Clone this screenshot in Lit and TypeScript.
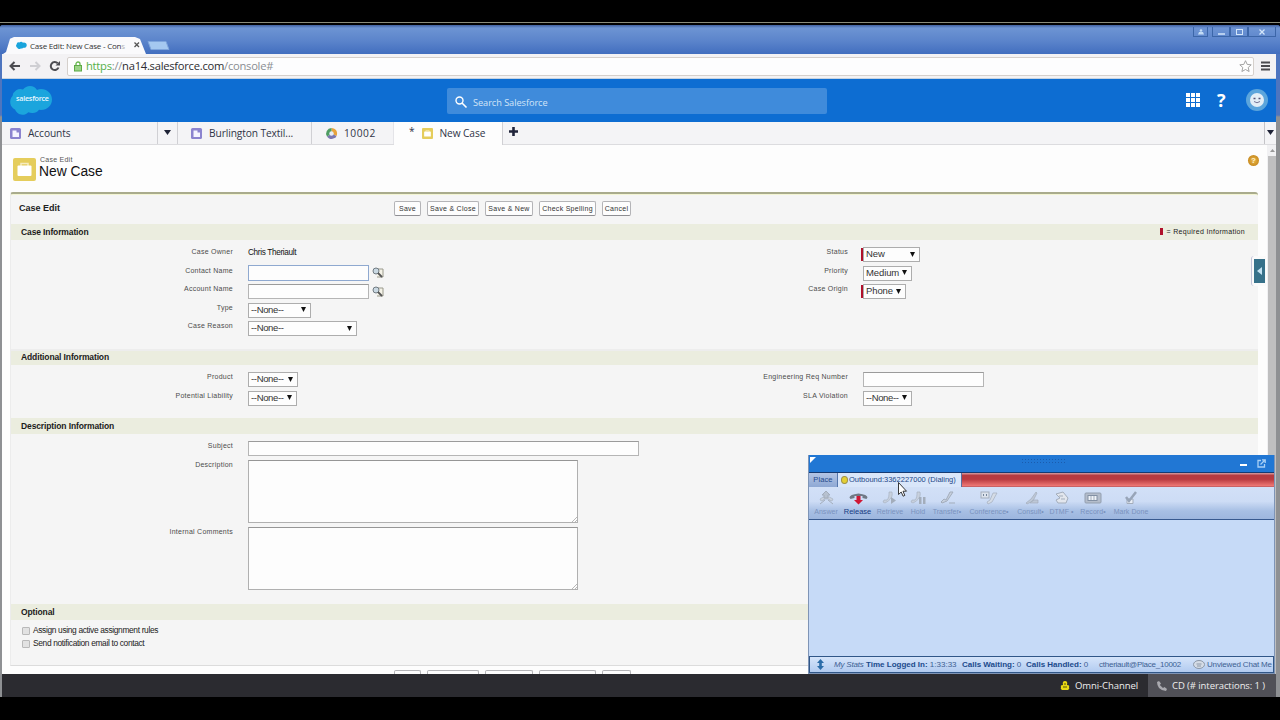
import { LitElement, html, css, svg } from "lit";
import { customElement } from "lit/decorators.js";

const cloudPath = "M13 5.5A9 9 0 0 1 20 2c3 0 5.500 1.500 7 4a9 9 0 0 1 4-1c6 0 11 4.500 11 10.500S37 26 31 26l-2-.2a8 8 0 0 1-7 3.200c-1.300 0-2.500-.3-3.600-.8A8 8 0 0 1 5 25.500 8.500 8.500 0 0 1 2.500 12 8 8 0 0 1 13 5.500z";

const arrow = svg`<path d="M0 0h5L2.500 5z" fill="#111"/>`;

@customElement("app-root")
export class AppRoot extends LitElement {
  static styles = css`
    :host { display: block; width: 1280px; height: 720px; background: #000; overflow: hidden; font-family: "Liberation Sans", Arial, sans-serif; color: #222; }
    * { box-sizing: border-box; }
    svg { display: block; flex: none; overflow: visible; }
    .screen { height: 720px; display: flex; flex-direction: column; position: relative; white-space: nowrap; }
    .strip { height: 25px; flex: none; padding-top: 22px; }
    .strip-line { height: 1px; background: #8a8c7c; }
    .window { height: 672px; flex: none; display: flex; flex-direction: column; background: linear-gradient(#4e75bf 0 90px, #8e9093 92px); padding: 0 4px 0 2px; border-top-left-radius: 3px; border-top-right-radius: 3px; overflow: hidden; }
    .titlebar { height: 29px; flex: none; margin: 0 -4px 0 -2px; background: linear-gradient(#3f5f9f 0, #6d94d3 3px, #5b84cb 55%, #426ebf); display: flex; align-items: flex-end; justify-content: space-between; }
    .tabs { display: flex; align-items: flex-end; padding-left: 3px; }
    .btab { width: 143px; height: 17px; background: #fafafc; clip-path: polygon(0 100%, 3px 88%, 7px 10%, 11px 0, 132px 0, 137px 12%, 143px 100%); display: flex; align-items: center; padding-left: 13px; font: 8px "Open Sans", sans-serif; color: #333; }
    .btab .t { width: 99px; margin: -1px 5px 0 3px; letter-spacing: -.2px; }
    .btab .f { color: #b5b5b8; }
    .btab svg { margin-top: -1px; }
    .newtab { width: 19px; height: 9px; margin: 0 0 4px 3px; background: #a5c8f0; border: 1px solid #7fa5dc; transform: skewX(20deg); border-radius: 1px; }
    .wbtns { align-self: flex-start; display: flex; padding: 2px 4px 0 0; height: 12px; }
    .wb { border: 1px solid #3c66a8; border-top: 0; height: 10px; display: flex; align-items: center; justify-content: center; }
    .w1 { width: 15px; margin-right: 4px; } .w2 { width: 18px; } .w3 { width: 18px; } .w4 { width: 28px; }
    .toolbar { height: 24px; flex: none; background: #f3f2f4; display: flex; align-items: center; padding: 0 6px 0 7px; }
    .toolbar .nav { display: flex; gap: 7px; width: 58px; }
    .url { flex: 1; height: 19px; background: #fdfdfe; border: 1px solid #d5d0cc; border-radius: 2px; display: flex; align-items: center; padding: 0 1px 0 6px; font: 11.200px "Open Sans", sans-serif; color: #8a8d92; }
    .url .u { margin-left: 4px; flex: 1; letter-spacing: -.26px; padding-bottom: 1px; }
    .green { color: #58b04a; } .dark { color: #2b2b30; }
    .menu { margin-left: 7px; }
    .sep { height: 1px; flex: none; background: #c5d3e2; }
    .header { height: 43px; flex: none; background: #0d6dd2; display: flex; align-items: center; padding-left: 8px; }
    .logo { margin-top: -3px; }
    .search { width: 380px; height: 26px; margin-left: 393px; margin-top: 1px; background: #3f8bdb; border-radius: 2px; display: flex; align-items: center; padding-left: 8px; color: #d3e5f8; font: 9.200px "Open Sans", sans-serif; }
    .search svg { margin-top: 2px; }
    .search span { margin-left: 6px; padding-top: 2px; letter-spacing: -.05px; }
    .hicons { margin-left: auto; display: flex; align-items: center; padding-right: 8px; margin-top: -2px; }
    .help { font: bold 18px/22px "Open Sans", sans-serif; color: #fff; width: 11px; margin: 0 18px 0 17px; }
    .ctabs { height: 23px; flex: none; background: #f4f4f6; display: flex; align-items: stretch; font: 10.200px/22px "Open Sans", sans-serif; letter-spacing: -.1px; color: #303447; border-bottom: 1px solid #dcdcdf; }
    .ct { display: flex; align-items: center; border-right: 1px solid #d0d0d4; }
    .c0 { width: 156px; padding-left: 8px; gap: 7px; }
    .c1 { width: 20px; padding-left: 6px; }
    .c1 svg, .c6 svg { margin-top: -2px; }
    .c2 { width: 134px; padding-left: 13px; gap: 7px; } .c3 { width: 82px; padding-left: 14px; gap: 7px; border-right-color: #e4e4e8; letter-spacing: .55px; }
    .c4 { width: 109px; padding: 0 0 1px 15px; background: #fdfdfd; margin-bottom: -1px; }
    .c4 .star { margin-top: -5px; }
    .c4 svg { margin: 0 7px 0 7px; }
    .c5 { padding-left: 6px; border: 0; flex: 1; }
    .c5 svg { margin-top: -3px; }
    .c6 { width: 12px; border: 0; border-left: 1px solid #c4c4c8; padding-left: 2px; }
    .content { flex: 1; min-height: 0; background: #fdfdfd; display: flex; overflow: hidden; }
    .page { width: 1261px; padding-left: 8px; display: flex; flex-direction: column; overflow: hidden; }
    .phead { height: 47px; flex: none; display: flex; padding: 13px 3px 0 3px; }
    .ptitle { margin-left: 3px; }
    .small { font-size: 7px; line-height: 8px; letter-spacing: .25px; color: #555; margin-top: -2px; padding-left: 1px; }
    .big { font-size: 13.800px; line-height: 15px; color: #111; letter-spacing: 0; }
    .qm { margin: -3px 1px 0 auto; width: 11px; height: 11px; border-radius: 50%; background: radial-gradient(#e9b64a, #bb7a10); color: #fff3cf; font: bold 8px/11px "Liberation Sans", sans-serif; text-align: center; }
    .card { width: 1248px; height: 474px; flex: none; background: #f5f5f5; border-top: 2px solid #a9ab8c; border-left: 1px solid #ececec; border-bottom: 1px solid #dcdcdc; border-radius: 3px 3px 0 0; box-shadow: inset 0 1px 0 #f3f5d3; }
    .chead { height: 30px; display: flex; align-items: center; padding: 0 0 2px 8px; }
    .ctitle { width: 375px; font-weight: bold; font-size: 9px; letter-spacing: 0; color: #222; }
    .btns { display: flex; gap: 6px; }
    .btn { height: 15px; border: 1px solid #b4b4b7; border-bottom-color: #8e8e92; border-radius: 2px; background: #fdfdfd; display: flex; align-items: center; justify-content: center; font-size: 7px; letter-spacing: .28px; color: #333; }
    .b0 { width: 27px; } .b1 { width: 52px; } .b2 { width: 48px; } .b3 { width: 57px; } .b4 { width: 29px; }
    .band { background: #ebeddf; display: flex; align-items: center; justify-content: space-between; padding: 0 13px 0 10px; font-size: 8.500px; font-weight: bold; height: 16px; color: #1b1b1b; letter-spacing: -.12px; }
    .band.b14 { height: 14px; box-shadow: 0 -2px 0 #ededed; padding-bottom: 2px; }
    .req { font-size: 7px; font-weight: normal; display: flex; align-items: center; gap: 4px; letter-spacing: .32px; padding-bottom: 1px; }
    .req i { width: 3px; height: 7px; background: #b0112b; }
    .cols { display: grid; grid-template-columns: 615px 1fr; align-items: start; }
    .s1 { height: 111px; padding-top: 7px; } .s2 { height: 53px; padding-top: 7px; } .s3 { height: 170px; padding-top: 7px; } .s4 { padding: 3px 0 0 11px; }
    .row { display: flex; align-items: flex-start; height: 18.500px; }
    .row.desc { height: 67px; } .row.sub { height: 19px; }
    .lab { width: 222px; text-align: right; font-size: 7px; line-height: 10px; letter-spacing: .26px; color: #4c4c4c; }
    .fld { margin-left: 15px; display: flex; align-items: center; }
    .own { font-size: 8.200px; line-height: 11px; letter-spacing: -.32px; color: #111; }
    .inp { width: 121px; height: 15px; background: #fdfdfd; border: 1px solid #b5b5b5; border-top-color: #9b9b9b; }
    .inp.focus { border-color: #8fa9d0; height: 16px; margin-top: -1px; }
    .inp.wide { width: 391px; }
    .area { width: 330px; height: 63px; background: #fdfdfd; border: 1px solid #b0b0b0; border-top-color: #969696; display: flex; align-items: flex-end; justify-content: flex-end; }
    .sel { height: 15px; background: #fdfdfd; border: 1px solid #adadad; font-size: 9.500px; line-height: 12px; color: #333; padding: 0 4px 1px 2px; display: flex; align-items: center; justify-content: space-between; }
    .sel.none span { letter-spacing: -.35px; }
    .sel.p span { letter-spacing: -.1px; }
    .look { margin: -1px 0 0 3px; }
    .must { width: 2px; height: 13px; background: #b0112b; margin-left: -2px; }
    .chk { display: flex; align-items: center; height: 13.500px; font-size: 8.400px; letter-spacing: -.34px; color: #222; }
    .chk i { width: 8px; height: 8px; background: #e2e2e2; border: 1px solid #b9b9b9; border-radius: 1px; margin-right: 3px; margin-top: 2px; }
    .bottom { padding: 4px 0 0 384px; display: flex; }
    .scroll { width: 13px; background: #f1f1f3; padding: 4px 2px 0 4px; border-left: 4px solid #fdfdfd; margin-left: 0; }
    .thumb { width: 8px; height: 520px; margin: 3px 0 0 -3px; background: #bfbfc0; }
    .tri { margin-left: -1px; }
    .footer { height: 23px; flex: none; background: #2b2b30; display: flex; justify-content: flex-end; font: 9.500px/23px "Open Sans", sans-serif; color: #eee; }
    .omni { width: 88px; display: flex; align-items: center; gap: 5px; letter-spacing: -.08px; }
    .cd { width: 128px; background: #505057; display: flex; align-items: center; gap: 5px; padding-left: 9px; letter-spacing: -.08px; }
    .side { position: absolute; left: 1251px; top: 256px; width: 15px; height: 30px; background: #fafafa; border-left: 1px solid #c3c3d8; border-radius: 3px 0 0 3px; padding: 3px 1px 3px 2px; }
    .side div { height: 24px; width: 11px; background: #37718a; display: flex; align-items: center; justify-content: center; }
    .phone { position: absolute; left: 808px; top: 455px; width: 467px; height: 219px; background: #c6daf7; border: 1px solid #7e94b6; border-top: 0; display: flex; flex-direction: column; color: #1d4687; }
    .ph { height: 18px; background: #2177d4; display: flex; padding: 2px 8px 0 1px; border-bottom: 1px solid #153a72; }
    .grip { width: 44px; height: 6px; margin: 1px 0 0 205px; background: radial-gradient(circle, #1a5cae .6px, transparent 1px) 0 0 / 3px 3px; }
    .ph .r { margin-left: auto; display: flex; gap: 10px; align-items: center; padding-bottom: 3px; }
    .min { width: 7px; height: 2px; background: #fff; margin-top: 4px; }
    .pt { height: 14px; display: flex; background: linear-gradient(#d8a0a4 0, #b53a40 18%, #b93a40 45%, #ee7875 92%, #ad5058); font-size: 7.500px; line-height: 14px; }
    .pl { width: 29px; background: linear-gradient(#b3c4e4, #8ea8d4); border-right: 1px solid #5576ac; text-align: center; letter-spacing: .1px; color: #254a8c; }
    .out { width: 124px; background: #d9e6fa; display: flex; align-items: center; padding-left: 3px; gap: 1px; border-right: 1px solid #5a6fa0; letter-spacing: 0; }
    .dot { width: 7px; height: 8px; border-radius: 50%; background: #e3cf35; border: 1px solid #9e9148; }
    .tools { height: 33px; background: linear-gradient(#d2e0f7, #cddcf5 45%, #a7bfe4 75%, #9db6de); border-bottom: 1px solid #37598f; display: grid; grid-template-columns: 30px 33px 32px 24px 34px 50px 33px 29px 34px 42px; padding: 4px 0 0 2px; }
    .tool { display: flex; flex-direction: column; align-items: center; font-size: 7px; line-height: 9px; color: #7a92bd; letter-spacing: .05px; gap: 2px; }
    .tool.on { color: #173b82; letter-spacing: 0; font-size: 7.500px; }
    .stats { margin-top: auto; height: 17px; border: 1px solid #315788; background: linear-gradient(#d5e4fa, #b2cbf0); display: flex; align-items: center; font-size: 8px; color: #3d5f93; overflow: hidden; }
    .stats b { color: #1b4a8c; }
    .g1 { width: 24px; padding-left: 7px; } .g2 { width: 32px; font-style: italic; letter-spacing: -.2px; } .g3 { width: 96px; } .g4 { width: 64px; } .g5 { width: 73px; } .g6 { width: 94px; letter-spacing: -.24px; } .g7 { width: 14px; } .g8 { letter-spacing: -.17px; }
    .cursor { position: absolute; left: 898px; top: 482px; }
  `;

  private buttons(labelled = true) {
    return ["Save", "Save & Close", "Save & New", "Check Spelling", "Cancel"].map(
      (t, i) => html`<div class="btn b${i}">${labelled ? t : ""}</div>`
    );
  }

  private sel(text: string, width: number, pad = false) {
    return html`<div class="sel ${pad ? "p" : "none"}" style="width:${width}px"><span>${text}</span><svg width="5" height="5">${arrow}</svg></div>`;
  }

  private row(label: string, field: unknown, cls = "") {
    return html`<div class="row ${cls}"><div class="lab">${label}</div><div class="fld">${field}</div></div>`;
  }

  private lookup() {
    return html`<svg class="look" width="11" height="11"><path d="M6 2h5v8H5" fill="#f5f3e8" stroke="#99998c"/><circle cx="4" cy="4" r="3" fill="#c9d8e2" stroke="#717b82"/><path d="M6 6l4 4" stroke="#555" stroke-width="1.800"/></svg>`;
  }

  private must(field: unknown) {
    return html`<i class="must"></i>${field}`;
  }

  private acct() {
    return html`<svg width="11" height="11"><rect width="11" height="11" rx="1.500" fill="#8c84cf"/><path d="M2.500 2.500h4v2H9v4.500H2.500z" fill="#f5f4ff"/></svg>`;
  }

  private caseIcon(size: number) {
    return html`<svg width=${size} height=${size} viewBox="0 0 23 23"><rect width="23" height="23" rx="2" fill="#e5cd5c"/><path d="M8 8V5.500h7V8" stroke="#f6ecc0" fill="none" stroke-width="1.500"/><rect x="4.500" y="7.500" width="14" height="10.500" rx="1" fill="#fff"/></svg>`;
  }

  private icon(i: number) {
    const g = "#a3adbb";
    const hand = svg`<path d="M10 1c1 4-1 8-7 11l-2-1 1-2 3 0c2-2 2-5 2-8z" fill="#c7d0de" stroke="${g}" stroke-width=".6"/>`;
    const shapes = [
      svg`<path d="M2 8q6-5 13 0l-1 2-3-1V8H6v1l-3 1z" fill="#c9d1dd" stroke="${g}" stroke-width=".6"/><path d="M8 0L4 4h2v3h4V4h2zM7 9L2 13M10 9l5 4" fill="#b7c1cf" stroke="${g}"/>`,
      svg`<path d="M-.5 6.500q0-3 9-4 9 1 9 4l-1 1.500-4-1V5h-8v2l-4 1z" fill="#707985"/><path d="M6.500 5h4v4h2.500L8.500 13.500 4 9h2.500z" fill="#cf1735"/>`,
      svg`${hand}<path d="M9 6l5 3.500L9 13z" fill="${g}"/>`,
      svg`${hand}<path d="M9 6h2.500v7H9zM13 6h2.500v7H13z" fill="${g}"/>`,
      svg`<path d="M14 1L8 10l-5 2-1-1 3-3 2 1 4-8zM10 12h6" fill="#c7d0de" stroke="${g}"/>`,
      svg`<path d="M16 2l-5 9-4 2-1-2 3-2 3-7z" fill="#d5dce6" stroke="${g}" stroke-width=".7"/><rect x="0" y="1" width="8" height="6" fill="#dce3ed" stroke="${g}"/><path d="M2 3h1v2H2zM5 3h1v2H5z" fill="#74849a"/>`,
      svg`<path d="M13 1L8 8l-5 4 1 1 6-3 4-8zM7 12h8v-3h-5z" fill="#bdc7d6" stroke="${g}" stroke-width=".7"/>`,
      svg`<path d="M2 3l7-2 5 6-2 5H4L2 9l4-2z" fill="#e2e6ed" stroke="${g}"/><path d="M5 5h4M7 8h4" stroke="${g}"/>`,
      svg`<rect x="0" y="2" width="16" height="10" rx="1" fill="#b4bdcb" stroke="#929eaf"/><rect x="3" y="4.500" width="9" height="5" fill="#eff3f8" stroke="#8290a4"/><path d="M6 5v4M9 5v4" stroke="${g}"/>`,
      svg`<path d="M4 8h6v4.500H4z" fill="#e9eef6" stroke="${g}"/><path d="M3 6l3 4 7-9" fill="none" stroke="#98a5b8" stroke-width="2.500"/>`,
    ];
    return svg`<svg width="16" height="14">${shapes[i]}</svg>`;
  }

  render() {
    const tools = ["Answer", "Release", "Retrieve", "Hold", "Transfer•", "Conference•", "Consult•", "DTMF •", "Record•", "Mark Done"];
    return html`<div class="screen">
      <div class="strip"><div class="strip-line"></div></div>
      <div class="window">
        <div class="titlebar">
          <div class="tabs">
            <div class="btab"><svg width="11" height="8" viewBox="0 0 43 30"><path d=${cloudPath} fill="#19a4dc"/></svg><span class="t">Case Edit: New Case - Con<span class="f">s</span></span>
              <svg width="6" height="6"><path d="M.5.5l4.500 4.500M5 .5L.5 5" stroke="#555" stroke-width="1.300"/></svg></div>
            <div class="newtab"></div>
          </div>
          <div class="wbtns">
            <div class="wb w1"><svg width="6" height="6"><circle cx="3" cy="1.500" r="1.300" fill="#c3dcf5"/><path d="M0 5.500l1-2.500h4l1 2.500z" fill="#c3dcf5"/></svg></div>
            <div class="wb w2"><svg width="7" height="6"><path d="M0 5h7" stroke="#d3e6fa" stroke-width="1.500"/></svg></div>
            <div class="wb w3"><svg width="7" height="6"><rect x=".5" y=".5" width="6" height="5" fill="none" stroke="#d3e6fa"/></svg></div>
            <div class="wb w4"><svg width="6" height="6"><path d="M.5.5l5 5M5.500.5l-5 5" stroke="#d3e6fa" stroke-width="1.300"/></svg></div>
          </div>
        </div>
        <div class="toolbar">
          <div class="nav">
            <svg width="12" height="10"><path d="M5.500 1L1.500 5l4 4M2 5h9" stroke="#4d4d52" stroke-width="2" fill="none"/></svg>
            <svg width="14" height="10"><path d="M7.500 1l4 4-4 4M11 5H2" stroke="#cfcfd3" stroke-width="2" fill="none"/></svg>
            <svg width="12" height="10"><path d="M9.500 6.500a4 4 0 1 1-.8-4.200" stroke="#4d4d52" stroke-width="2" fill="none"/><path d="M11 0v4.500H6.500z" fill="#4d4d52"/></svg>
          </div>
          <div class="url">
            <svg width="8" height="11"><path d="M2 5V3a2 2 0 0 1 4 0v2" stroke="#68b84e" fill="none" stroke-width="1.300"/><rect x=".5" y="4.500" width="7" height="5.500" fill="#9cd488" stroke="#5daa46"/></svg>
            <span class="u"><span class="green">https</span>://<span class="dark">na14.salesforce.com</span>/console#</span>
            <svg width="13" height="12"><path d="M6.500.7l1.700 3.700 4 .4-3 2.700.9 4-3.600-2-3.600 2 .9-4-3-2.700 4-.4z" fill="#fff" stroke="#999" stroke-width=".9"/></svg>
          </div>
          <svg class="menu" width="9" height="10"><path d="M0 1.500h9M0 5h9M0 8.500h9" stroke="#4b4b4f" stroke-width="2"/></svg>
        </div>
        <div class="sep"></div>
        <div class="header">
          <svg class="logo" width="44" height="30" viewBox="0 0 44 30"><path d=${cloudPath} fill="#1ba5dd"/><text x="22.500" y="17" font-family="Open Sans" font-size="7.200" font-weight="600" fill="#e8f7ff" text-anchor="middle" textLength="33">salesforce</text></svg>
          <div class="search"><svg width="12" height="12"><circle cx="4.500" cy="4.500" r="3.500" fill="none" stroke="#fff" stroke-width="1.400"/><path d="M7 7l4.500 4.500" stroke="#fff" stroke-width="1.600"/></svg><span>Search Salesforce</span></div>
          <div class="hicons">
            <svg width="14" height="14"><path d="M0 2h14M0 7h14M0 12h14" stroke="#fff" stroke-width="4" stroke-dasharray="4 1"/></svg>
            <span class="help">?</span>
            <svg width="22" height="22"><circle cx="11" cy="11" r="11" fill="#5ba5dc"/><circle cx="11" cy="11" r="7" fill="#e3eef6"/><path d="M7.500 9.500h2M12.500 9.500h2" stroke="#557" stroke-width="1.500"/><path d="M8 12.500q3 2.500 6 0" stroke="#779" fill="none"/></svg>
          </div>
        </div>
        <div class="ctabs">
          <div class="ct c0">${this.acct()}<span>Accounts</span></div>
          <div class="ct c1"><svg width="7" height="5"><path d="M0 0h7L3.500 5z" fill="#1e2236"/></svg></div>
          <div class="ct c2">${this.acct()}<span>Burlington Textil...</span></div>
          <div class="ct c3"><svg width="11" height="11"><path d="M5.500 5.500V0A5.500 5.500 0 0 1 10.500 8z" fill="#e8a33a"/><path d="M5.500 5.500L10.500 8A5.500 5.500 0 0 1 1 8.500z" fill="#7b78b0"/><path d="M5.500 5.500L1 8.500A5.500 5.500 0 0 1 5.500 0z" fill="#4f9d62"/><circle cx="5.500" cy="5.500" r="2.200" fill="#e6edf7"/></svg><span>10002</span></div>
          <div class="ct c4"><span class="star">*</span>${this.caseIcon(11)}<span>New Case</span></div>
          <div class="ct c5"><svg width="9" height="9"><path d="M4.500 0v9M0 4.500h9" stroke="#20243a" stroke-width="2.600"/></svg></div>
          <div class="ct c6"><svg width="7" height="5"><path d="M0 0h7L3.500 5z" fill="#1e2236"/></svg></div>
        </div>
        <div class="content">
          <div class="page">
            <div class="phead">${this.caseIcon(23)}<div class="ptitle"><div class="small">Case Edit</div><div class="big">New Case</div></div><div class="qm">?</div></div>
            <div class="card">
              <div class="chead"><div class="ctitle">Case Edit</div><div class="btns">${this.buttons()}</div></div>
              <div class="band"><span>Case Information</span><span class="req"><i></i>= Required Information</span></div>
              <div class="cols s1">
                <div>
                  ${this.row("Case Owner", html`<span class="own">Chris Theriault</span>`)}
                  ${this.row("Contact Name", html`<div class="inp focus"></div>${this.lookup()}`)}
                  ${this.row("Account Name", html`<div class="inp"></div>${this.lookup()}`)}
                  ${this.row("Type", this.sel("--None--", 63))}
                  ${this.row("Case Reason", this.sel("--None--", 109))}
                </div>
                <div>
                  ${this.row("Status", this.must(this.sel("New", 57, true)))}
                  ${this.row("Priority", this.sel("Medium", 49, true))}
                  ${this.row("Case Origin", this.must(this.sel("Phone", 43, true)))}
                </div>
              </div>
              <div class="band b14">Additional Information</div>
              <div class="cols s2">
                <div>
                  ${this.row("Product", this.sel("--None--", 50))}
                  ${this.row("Potential Liability", this.sel("--None--", 49))}
                </div>
                <div>
                  ${this.row("Engineering Req Number", html`<div class="inp"></div>`)}
                  ${this.row("SLA Violation", this.sel("--None--", 49))}
                </div>
              </div>
              <div class="band">Description Information</div>
              <div class="s3">
                ${this.row("Subject", html`<div class="inp wide"></div>`, "sub")}
                ${this.row("Description", html`<div class="area"><svg width="5" height="5"><path d="M0 5l5-5M3 5l2-2" stroke="#999" stroke-width=".7"/></svg></div>`, "desc")}
                ${this.row("Internal Comments", html`<div class="area"><svg width="5" height="5"><path d="M0 5l5-5M3 5l2-2" stroke="#999" stroke-width=".7"/></svg></div>`, "desc")}
              </div>
              <div class="band">Optional</div>
              <div class="s4">
                <div class="chk"><i></i>Assign using active assignment rules</div>
                <div class="chk"><i></i>Send notification email to contact</div>
              </div>
            </div>
            <div class="bottom"><div class="btns">${this.buttons(false)}</div></div>
          </div>
          <div class="scroll"><svg class="tri" width="6" height="4"><path d="M0 3l2.500-3L5 3z" fill="#999"/></svg><div class="thumb"></div></div>
        </div>
        <div class="footer">
          <div class="omni"><svg width="10" height="11"><path d="M1 7q-1-2 2-2Q2 1 5 1t2 4q3 0 2 2 1 2-1 3H2Q0 9 1 7z" fill="#e9d813"/><path d="M3 7h4M4 4h2" stroke="#57500c"/></svg>Omni-Channel</div>
          <div class="cd"><svg width="10" height="10"><path d="M0 1l2-1 2 2.500L2.800 4 6 7l1.500-1L10 8 9 10Q5 10 2 7 0 4 0 1z" fill="#a9a9af"/></svg>CD (# interactions: 1 )</div>
        </div>
      </div>
      <div class="side"><div><svg width="5" height="8"><path d="M5 0v8L0 4z" fill="#c3e2f2"/></svg></div></div>
      <div class="phone">
        <div class="ph"><svg width="6" height="6"><path d="M0 0h6L0 6z" fill="#fff"/></svg><div class="grip"></div><div class="r"><div class="min"></div><svg width="9" height="9"><path d="M4 1.500H1v6.500h6.500V5M5 .8h3.200V4M8 1L3.500 5.500" fill="none" stroke="#a9d0f5" stroke-width="1.300"/></svg></div></div>
        <div class="pt"><div class="pl">Place</div><div class="out"><i class="dot"></i>Outbound:3362227000 (Dialing)</div></div>
        <div class="tools">${tools.map((t, i) => html`<div class="tool ${i === 1 ? "on" : ""}">${this.icon(i)}<span>${t}</span></div>`)}</div>
        <div class="stats">
          <div class="g1"><svg width="7" height="11"><path d="M3.500 0L7 4H4.800v3H7l-3.500 4L0 7h2.200V4H0z" fill="#2b6ca8"/></svg></div>
          <div class="g2">My Stats</div><div class="g3"><b>Time Logged In:</b> 1:33:33</div><div class="g4"><b>Calls Waiting:</b> 0</div><div class="g5"><b>Calls Handled:</b> 0</div><div class="g6">ctheriault@Place_10002</div>
          <div class="g7"><svg width="12" height="10"><ellipse cx="6" cy="4.500" rx="5.500" ry="4" fill="#d5dce6" stroke="#8c98a8"/><path d="M3.500 4h5M4 6h4" stroke="#8c98a8"/></svg></div><div class="g8">Unviewed Chat Me</div>
        </div>
      </div>
      <svg class="cursor" width="9" height="14"><path d="M.5.5v12l2.700-2.500 1.900 4.200 1.700-.8L5 9.200h3.500z" fill="#fff" stroke="#222" stroke-width=".9"/></svg>
    </div>`;
  }
}
